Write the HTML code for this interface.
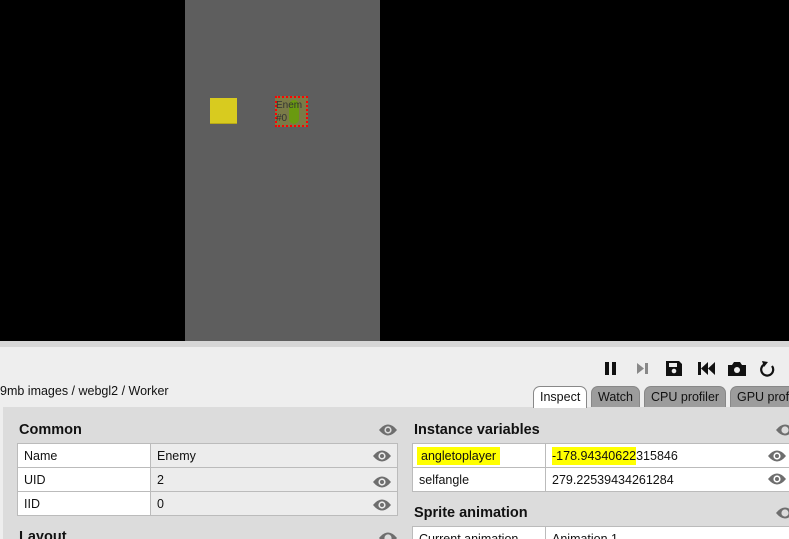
<!DOCTYPE html><html style="width:789px;height:539px;overflow:hidden"><head><style>
*{margin:0;padding:0;box-sizing:border-box}
body{width:789px;height:539px;overflow:hidden;background:#000;font-family:"Liberation Sans",sans-serif;position:relative;font-size:12.5px;color:#111}
.a{position:absolute}
table{border-collapse:collapse;position:absolute;background:#fff}
td{border:1px solid #bbb;height:24px;padding:0 6px;font-size:12.5px;white-space:nowrap}
td.v{background:#ececec}
h3{position:absolute;font-size:14.5px;font-weight:bold;white-space:nowrap}
.tab{position:absolute;top:386px;height:21px;border:1px solid #888;border-bottom:none;border-radius:7px 7px 0 0;background:#9c9c9c;font-size:12.5px;padding:3px 6px 0;color:#111;white-space:nowrap;overflow:hidden}
</style></head><body>
<div class="a" style="left:185px;top:0;width:195px;height:341px;background:#5e5e5e"></div>
<div class="a" style="left:210px;top:98px;width:27px;height:26px;background:#d8cb1f;border-bottom:1px solid #b8a818"></div>
<div class="a" style="left:275px;top:96px;width:33px;height:31px;background:#7a7a47;border:2px dotted #f00"></div>
<div class="a" style="left:289px;top:100px;width:10px;height:24px;background:#6a9a10;border-radius:5px"></div>
<div class="a" style="left:276px;top:99px;font-size:10px;line-height:13px;color:#333">Enem<br>#0</div>
<div class="a" style="left:0;top:341px;width:789px;height:6px;background:#d6d6d6"></div>
<div class="a" style="left:0;top:347px;width:789px;height:60px;background:#eee"></div>
<div class="a" style="left:0;top:384px;font-size:12.5px">9mb images / webgl2 / Worker</div>
<svg class="a" style="left:600px;top:358px" width="189" height="22" viewBox="0 0 189 22">
<rect x="5" y="4" width="4" height="13" fill="#111"/><rect x="12" y="4" width="4" height="13" fill="#111"/>
<path d="M37 5 L44 10.5 L37 16Z" fill="#888"/><rect x="45" y="5" width="3" height="11" fill="#888"/>
<path d="M66 3 h13 l3 3 v12 h-16z" fill="#111"/><rect x="69" y="5" width="8" height="4" fill="#eee"/><circle cx="74" cy="13" r="2.3" fill="#eee"/>
<rect x="98" y="4" width="3" height="13" fill="#111"/><path d="M108 4 L101 10.5 L108 17Z M115 4 L108 10.5 L115 17Z" fill="#111"/>
<path d="M128 7 h4 l2-3 h6 l2 3 h4 v11 h-18z" fill="#111"/><circle cx="137" cy="12" r="3" fill="#eee"/>
<path d="M165 6 A6 6 0 1 0 172 8" stroke="#111" stroke-width="2.2" fill="none"/><path d="M162 3 L168 4 L164 9Z" fill="#111"/>
</svg>
<div class="tab" style="left:533px;background:#fff;z-index:2;height:22px">Inspect</div>
<div class="tab" style="left:591px">Watch</div>
<div class="tab" style="left:644px">CPU profiler</div>
<div class="tab" style="left:730px;width:70px">GPU profiler</div>
<div class="a" style="left:0;top:407px;width:789px;height:132px;background:#dcdcdc;overflow:hidden">
<div class="a" style="left:0;top:0;width:3px;height:132px;background:#eee"></div>
<h3 style="left:19px;top:15px">Common</h3>
<table style="left:17px;top:36px;width:381px"><tr><td style="width:133px">Name</td><td class="v">Enemy</td></tr><tr><td>UID</td><td class="v">2</td></tr><tr><td>IID</td><td class="v">0</td></tr></table>
<h3 style="left:19px;top:122px">Layout</h3>
<h3 style="left:414px;top:15px">Instance variables</h3>
<table style="left:412px;top:36px;width:390px"><tr><td style="width:133px;height:23px"><span style="background:#ff0;padding:2px 4px;margin-left:-2px">angletoplayer</span></td><td class="v" style="background:#fff"><span style="background:#ff0;padding:2px 0">-178.94340622</span>315846</td></tr><tr><td style="height:23px">selfangle</td><td class="v" style="background:#fff">279.22539434261284</td></tr></table>
<h3 style="left:414px;top:98px">Sprite animation</h3>
<table style="left:412px;top:119px;width:390px"><tr><td style="width:133px">Current animation</td><td>Animation 1</td></tr></table>
</div>
<svg class="a" style="left:0;top:0" width="789" height="539">
<g fill="#6e6e6e">
<g transform="translate(388,430)"><path d="M-9 0 Q0 -11 9 0 Q0 11 -9 0Z"/><circle r="3.6" fill="#dcdcdc"/><circle r="2"/></g>
<g transform="translate(382,456)"><path d="M-9 0 Q0 -11 9 0 Q0 11 -9 0Z"/><circle r="3.6" fill="#ececec"/><circle r="2"/></g>
<g transform="translate(382,482)"><path d="M-9 0 Q0 -11 9 0 Q0 11 -9 0Z"/><circle r="3.6" fill="#ececec"/><circle r="2"/></g>
<g transform="translate(382,505)"><path d="M-9 0 Q0 -11 9 0 Q0 11 -9 0Z"/><circle r="3.6" fill="#ececec"/><circle r="2"/></g>
<g transform="translate(388,538)"><path d="M-9 0 Q0 -11 9 0 Q0 11 -9 0Z"/><circle r="3.6" fill="#dcdcdc"/></g>
<g transform="translate(785,430)"><path d="M-9 0 Q0 -11 9 0 Q0 11 -9 0Z"/><circle r="3.6" fill="#dcdcdc"/></g>
<g transform="translate(777,456)"><path d="M-9 0 Q0 -11 9 0 Q0 11 -9 0Z"/><circle r="3.6" fill="#fff"/><circle r="2"/></g>
<g transform="translate(777,479)"><path d="M-9 0 Q0 -11 9 0 Q0 11 -9 0Z"/><circle r="3.6" fill="#fff"/><circle r="2"/></g>
<g transform="translate(785,513)"><path d="M-9 0 Q0 -11 9 0 Q0 11 -9 0Z"/><circle r="3.6" fill="#dcdcdc"/></g>
</g></svg>
</body></html>
